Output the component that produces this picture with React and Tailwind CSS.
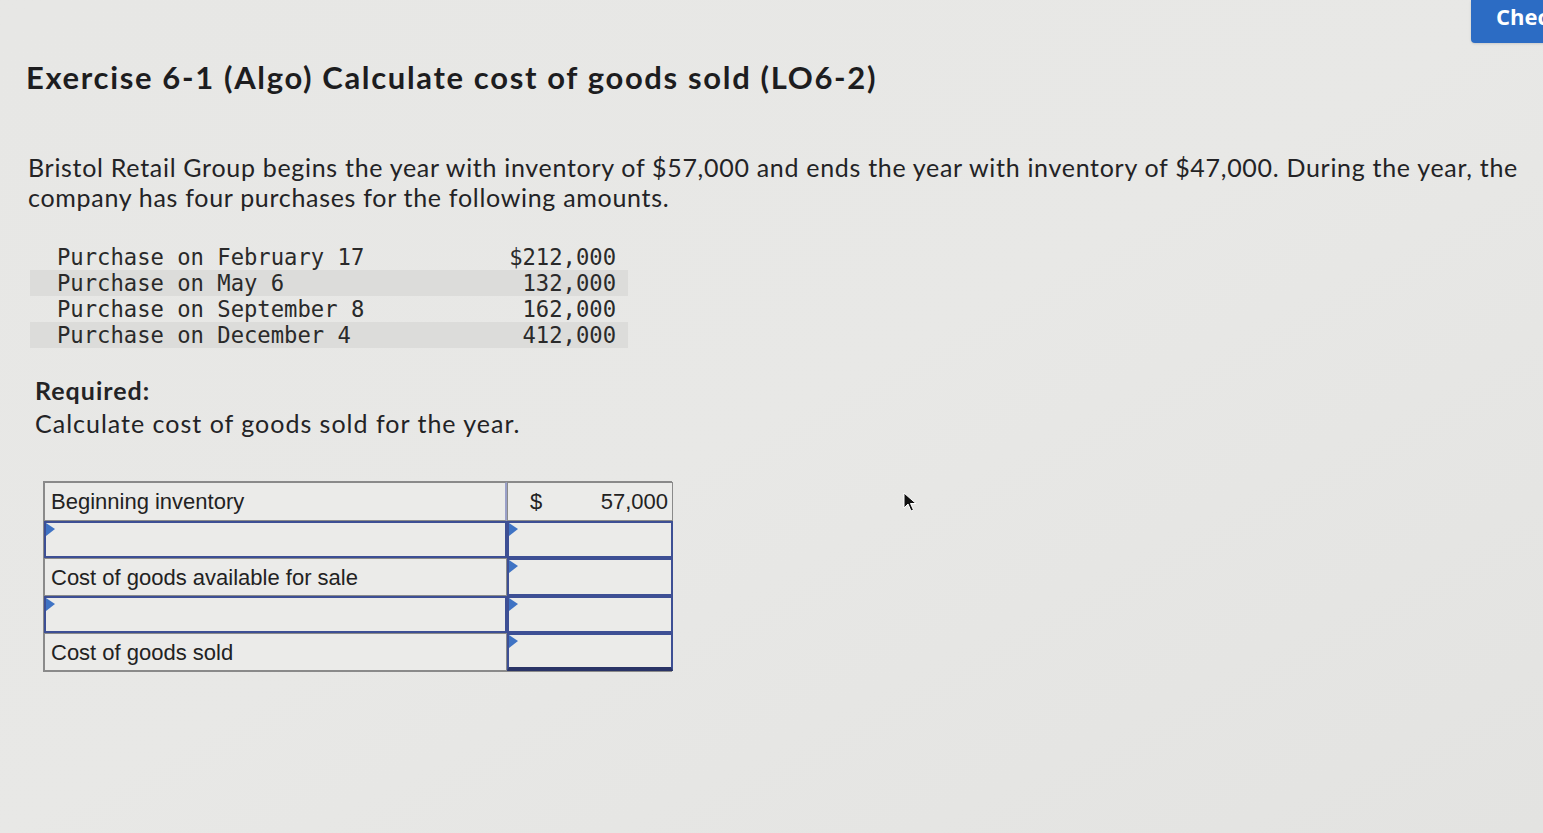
import React from "react";

const purchases = [
  { label: "Purchase on February 17", amount: "$212,000" },
  { label: "Purchase on May 6", amount: "132,000" },
  { label: "Purchase on September 8", amount: "162,000" },
  { label: "Purchase on December 4", amount: "412,000" },
];

// little blue corner marker on the input cells
const Marker = () => (
  <svg
    className="absolute left-0 top-0"
    width="9"
    height="14"
    viewBox="0 0 9 14"
  >
    <path d="M0 0 L9 6 L0 13 Z" fill="#3f73c4" />
  </svg>
);

const InputCell = ({ className = "", last }) => (
  <div
    className={`relative h-full border-2 border-[#3d4f94] bg-[#ebebe9] ${
      last ? "border-b-[4px] border-b-[#2a3466]" : ""
    } ${className}`}
  >
    <Marker />
  </div>
);

const TextCell = ({ children, className = "" }) => (
  <div
    className={`flex h-full items-center border border-[#8a8a8a] bg-[#ebebe9] px-[6px] text-[22px] text-[#222] ${className}`}
  >
    {children}
  </div>
);

const App = () => {
  return (
    <div className="relative h-[833px] w-[1543px] overflow-hidden bg-gradient-to-br from-[#e7e7e5] via-[#e8e8e6] to-[#e3e3e1] pl-[26px] font-['Lato','Open_Sans',sans-serif] text-[#1d1d1f]">
      {/* check button, cut off at the edge */}
      <div className="absolute right-[-60px] top-0 h-[43px] w-[132px] rounded-bl-[4px] bg-[#2c6cc4] pl-[25px] pt-[2px] font-['Open_Sans',sans-serif] text-[22px] font-bold leading-[28px] text-white shadow-sm">
        Check
      </div>

      <h1 className="pt-[57px] text-[31px] font-bold leading-[40px] tracking-[1.65px]">
        Exercise 6-1 (Algo) Calculate cost of goods sold (LO6-2)
      </h1>

      <p className="mt-[55px] pl-[2px] text-[25px] leading-[30px] tracking-[0.7px] text-[#232325]">
        Bristol Retail Group begins the year with inventory of $57,000 and ends
        the year with inventory of $47,000. During the year, the company has
        four purchases for the following amounts.
      </p>

      <div className="ml-[4px] mt-[32px] w-[598px] font-['DejaVu_Sans_Mono',monospace] text-[22.2px] leading-[26px] text-[#2a2a2a]">
        {purchases.map((p, i) => (
          <div
            key={p.label}
            className={`flex justify-between pl-[27px] pr-[12px] ${
              i % 2 === 1 ? "bg-[#dcdcda]" : ""
            }`}
          >
            <span>{p.label}</span>
            <span>{p.amount}</span>
          </div>
        ))}
      </div>

      <div className="ml-[9px] mt-[26px] text-[25px] leading-[33px] tracking-[1px] text-[#232325]">
        <div className="font-bold">Required:</div>
        <div>Calculate cost of goods sold for the year.</div>
      </div>

      <div className="ml-[17px] mt-[41px] grid w-[629px] grid-cols-[463px_166px] grid-rows-[39px_37px_38px_37px_38px] font-['Liberation_Sans',Arial,sans-serif] border border-[#8a8a8a]">
        <TextCell className="border-r-2 border-r-[#9aa0c8]">
          Beginning inventory
        </TextCell>
        <TextCell className="justify-between pl-[22px] pr-[4px]">
          <span>$</span>
          <span>57,000</span>
        </TextCell>

        <InputCell />
        <InputCell />

        <TextCell>Cost of goods available for sale</TextCell>
        <InputCell />

        <InputCell />
        <InputCell />

        <TextCell>Cost of goods sold</TextCell>
        <InputCell last />
      </div>

      {/* mouse pointer */}
      <svg
        className="absolute left-[903px] top-[492px]"
        width="16"
        height="22"
        viewBox="0 0 16 22"
      >
        <path
          d="M1 1 L1 16 L5 12 L8 19 L10.5 18 L7.5 11.5 L13 11.5 Z"
          fill="#111"
          stroke="#fff"
          strokeWidth="1"
        />
      </svg>
    </div>
  );
};

export default App;
